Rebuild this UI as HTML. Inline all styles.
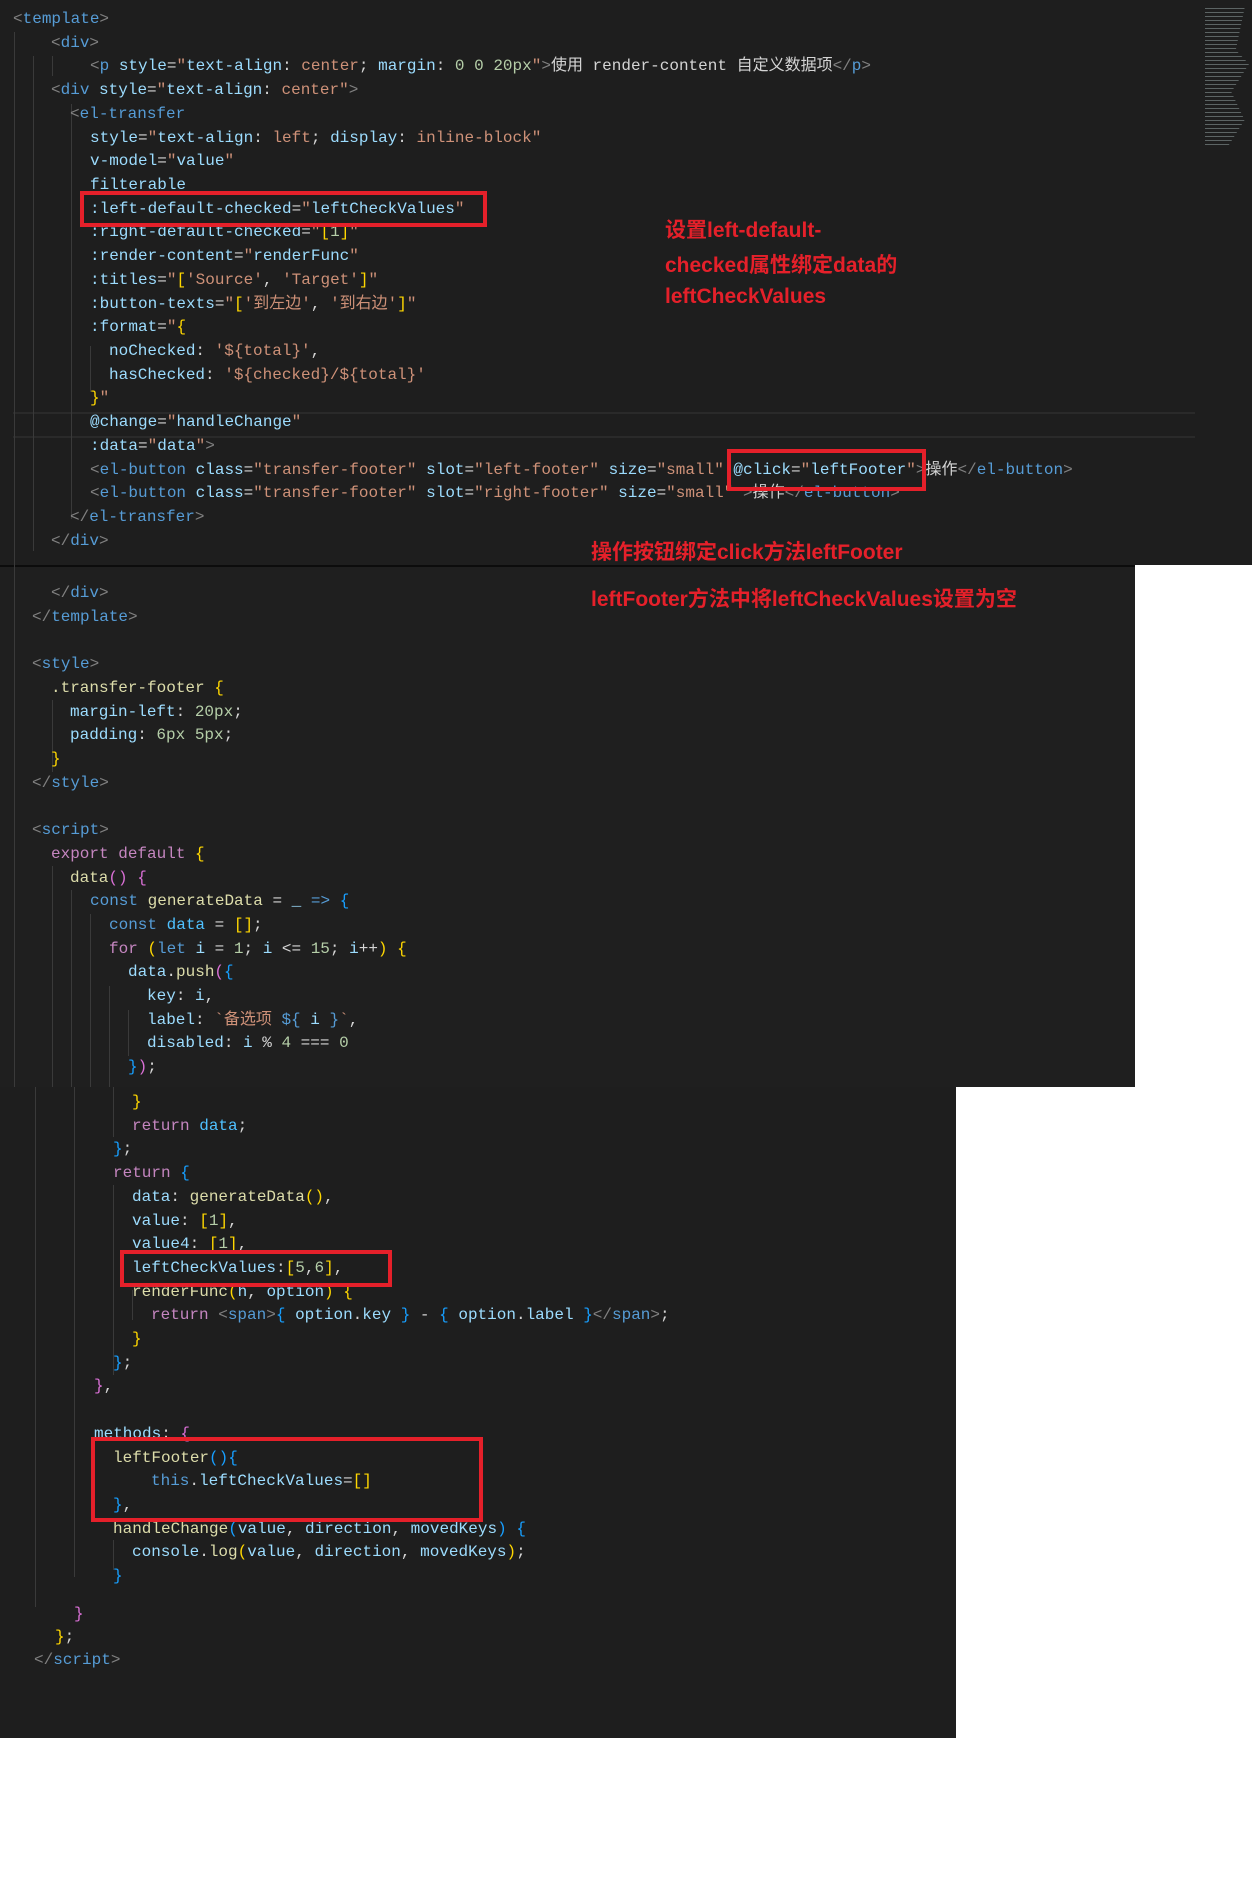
<!DOCTYPE html>
<html><head><meta charset="utf-8"><style>
html,body{margin:0;padding:0;background:#fff;}
body{width:1252px;height:1878px;position:relative;overflow:hidden;font-family:"Liberation Mono","Noto Sans CJK SC",monospace;font-size:16px;}
.p{position:absolute;background:#1e1e1e;}
.l{position:absolute;white-space:pre;height:24px;line-height:24px;color:#d4d4d4;}
.t{color:#808080}.g{color:#569cd6}.a{color:#9cdcfe}.s{color:#ce9178}.w{color:#d4d4d4}
.k{color:#c586c0}.f{color:#dcdcaa}.y{color:#ffd700}.pp{color:#da70d6}.bl{color:#179fff}.n{color:#b5cea8}.v{color:#4fc1ff}
.box{position:absolute;border:4px solid #e5202a;box-sizing:border-box;}
.ann{position:absolute;color:#e5202a;font-weight:bold;font-size:21px;font-family:"Liberation Sans","Noto Sans CJK SC",sans-serif;white-space:nowrap;line-height:26px;}
.ig{position:absolute;width:1px;background:#3a3a3a;}
</style></head><body>

<div class="p" style="left:0;top:0;width:1252px;height:565px;"></div>
<div class="p" style="left:0;top:565px;width:1135px;height:522px;background:#1f1f1f;border-top:2px solid #0c0c0c;box-sizing:border-box;"></div>
<div class="p" style="left:0;top:1087px;width:956px;height:651px;"></div>

<div style="position:absolute;left:13px;top:412px;width:1182px;height:22px;border-top:2px solid #2a2a2a;border-bottom:2px solid #2a2a2a;"></div>
<div class="ig" style="left:14px;top:32px;height:533px"></div>
<div class="ig" style="left:33px;top:56px;height:495px"></div>
<div class="ig" style="left:52px;top:56px;height:20px"></div>
<div class="ig" style="left:71px;top:104px;height:415px"></div>
<div class="ig" style="left:90px;top:346px;height:46px"></div>
<div class="ig" style="left:14px;top:565px;height:522px"></div>
<div class="ig" style="left:52px;top:700px;height:72px"></div>
<div class="ig" style="left:52px;top:866px;height:221px"></div>
<div class="ig" style="left:71px;top:890px;height:197px"></div>
<div class="ig" style="left:90px;top:914px;height:173px"></div>
<div class="ig" style="left:109px;top:986px;height:101px"></div>
<div class="ig" style="left:128px;top:1010px;height:46px"></div>
<div class="ig" style="left:35px;top:1087px;height:520px"></div>
<div class="ig" style="left:74px;top:1087px;height:490px"></div>
<div class="ig" style="left:113px;top:1087px;height:50px"></div>
<div class="ig" style="left:113px;top:1185px;height:190px"></div>
<div class="ig" style="left:132px;top:1290px;height:30px"></div>
<div class="ig" style="left:113px;top:1540px;height:30px"></div>

<div style="position:absolute;left:1205px;top:8px;width:44px;height:140px;opacity:.5;background:repeating-linear-gradient(#9aa 0 1px,transparent 1px 4px);clip-path:polygon(0 0,90% 0,70% 30%,100% 40%,60% 60%,90% 80%,50% 100%,0 100%);"></div>

<!-- Panel 1 -->
<div class="l" style="left:13px;top:7px"><span class="t">&lt;</span><span class="g">template</span><span class="t">&gt;</span></div>
<div class="l" style="left:51px;top:31px"><span class="t">&lt;</span><span class="g">div</span><span class="t">&gt;</span></div>
<div class="l" style="left:90px;top:54px"><span class="t">&lt;</span><span class="g">p</span> <span class="a">style</span>=<span class="s">"</span><span class="a">text-align</span>: <span class="s">center</span>; <span class="a">margin</span>: <span class="n">0 0 20px</span><span class="s">"</span><span class="t">&gt;</span>使用 render-content 自定义数据项<span class="t">&lt;/</span><span class="g">p</span><span class="t">&gt;</span></div>
<div class="l" style="left:51px;top:78px"><span class="t">&lt;</span><span class="g">div</span> <span class="a">style</span>=<span class="s">"</span><span class="a">text-align</span>: <span class="s">center</span><span class="s">"</span><span class="t">&gt;</span></div>
<div class="l" style="left:70px;top:102px"><span class="t">&lt;</span><span class="g">el-transfer</span></div>
<div class="l" style="left:90px;top:126px"><span class="a">style</span>=<span class="s">"</span><span class="a">text-align</span>: <span class="s">left</span>; <span class="a">display</span>: <span class="s">inline-block</span><span class="s">"</span></div>
<div class="l" style="left:90px;top:149px"><span class="a">v-model</span>=<span class="s">"</span><span class="a">value</span><span class="s">"</span></div>
<div class="l" style="left:90px;top:173px"><span class="a">filterable</span></div>
<div class="l" style="left:90px;top:197px"><span class="a">:left-default-checked</span>=<span class="s">"</span><span class="a">leftCheckValues</span><span class="s">"</span></div>
<div class="l" style="left:90px;top:220px"><span class="a">:right-default-checked</span>=<span class="s">"</span><span class="y">[</span><span class="n">1</span><span class="y">]</span><span class="s">"</span></div>
<div class="l" style="left:90px;top:244px"><span class="a">:render-content</span>=<span class="s">"</span><span class="a">renderFunc</span><span class="s">"</span></div>
<div class="l" style="left:90px;top:268px"><span class="a">:titles</span>=<span class="s">"</span><span class="y">[</span><span class="s">'Source'</span>, <span class="s">'Target'</span><span class="y">]</span><span class="s">"</span></div>
<div class="l" style="left:90px;top:292px"><span class="a">:button-texts</span>=<span class="s">"</span><span class="y">[</span><span class="s">'到左边'</span>, <span class="s">'到右边'</span><span class="y">]</span><span class="s">"</span></div>
<div class="l" style="left:90px;top:315px"><span class="a">:format</span>=<span class="s">"</span><span class="y">{</span></div>
<div class="l" style="left:109px;top:339px"><span class="a">noChecked</span>: <span class="s">'${total}'</span>,</div>
<div class="l" style="left:109px;top:363px"><span class="a">hasChecked</span>: <span class="s">'${checked}/${total}'</span></div>
<div class="l" style="left:90px;top:386px"><span class="y">}</span><span class="s">"</span></div>
<div class="l" style="left:90px;top:410px"><span class="a">@change</span>=<span class="s">"</span><span class="a">handleChange</span><span class="s">"</span></div>
<div class="l" style="left:90px;top:434px"><span class="a">:data</span>=<span class="s">"</span><span class="a">data</span><span class="s">"</span><span class="t">&gt;</span></div>
<div class="l" style="left:90px;top:458px"><span class="t">&lt;</span><span class="g">el-button</span> <span class="a">class</span>=<span class="s">"transfer-footer"</span> <span class="a">slot</span>=<span class="s">"left-footer"</span> <span class="a">size</span>=<span class="s">"small"</span> <span class="a">@click</span>=<span class="s">"</span><span class="a">leftFooter</span><span class="s">"</span><span class="t">&gt;</span>操作<span class="t">&lt;/</span><span class="g">el-button</span><span class="t">&gt;</span></div>
<div class="l" style="left:90px;top:481px"><span class="t">&lt;</span><span class="g">el-button</span> <span class="a">class</span>=<span class="s">"transfer-footer"</span> <span class="a">slot</span>=<span class="s">"right-footer"</span> <span class="a">size</span>=<span class="s">"small"</span> <span class="t">&gt;</span>操作<span class="t">&lt;/</span><span class="g">el-button</span><span class="t">&gt;</span></div>
<div class="l" style="left:70px;top:505px"><span class="t">&lt;/</span><span class="g">el-transfer</span><span class="t">&gt;</span></div>
<div class="l" style="left:51px;top:529px"><span class="t">&lt;/</span><span class="g">div</span><span class="t">&gt;</span></div>

<!-- Panel 2 -->
<div class="l" style="left:51px;top:581px"><span class="t">&lt;/</span><span class="g">div</span><span class="t">&gt;</span></div>
<div class="l" style="left:32px;top:605px"><span class="t">&lt;/</span><span class="g">template</span><span class="t">&gt;</span></div>
<div class="l" style="left:32px;top:652px"><span class="t">&lt;</span><span class="g">style</span><span class="t">&gt;</span></div>
<div class="l" style="left:51px;top:676px"><span class="f">.transfer-footer</span> <span class="y">{</span></div>
<div class="l" style="left:70px;top:700px"><span class="a">margin-left</span>: <span class="n">20px</span>;</div>
<div class="l" style="left:70px;top:723px"><span class="a">padding</span>: <span class="n">6px 5px</span>;</div>
<div class="l" style="left:51px;top:747px"><span class="y">}</span></div>
<div class="l" style="left:32px;top:771px"><span class="t">&lt;/</span><span class="g">style</span><span class="t">&gt;</span></div>
<div class="l" style="left:32px;top:818px"><span class="t">&lt;</span><span class="g">script</span><span class="t">&gt;</span></div>
<div class="l" style="left:51px;top:842px"><span class="k">export</span> <span class="k">default</span> <span class="y">{</span></div>
<div class="l" style="left:70px;top:866px"><span class="f">data</span><span class="pp">()</span> <span class="pp">{</span></div>
<div class="l" style="left:90px;top:889px"><span class="g">const</span> <span class="f">generateData</span> = <span class="a">_</span> <span class="g">=&gt;</span> <span class="bl">{</span></div>
<div class="l" style="left:109px;top:913px"><span class="g">const</span> <span class="v">data</span> = <span class="y">[]</span>;</div>
<div class="l" style="left:109px;top:937px"><span class="k">for</span> <span class="y">(</span><span class="g">let</span> <span class="a">i</span> = <span class="n">1</span>; <span class="a">i</span> &lt;= <span class="n">15</span>; <span class="a">i</span>++<span class="y">)</span> <span class="y">{</span></div>
<div class="l" style="left:128px;top:960px"><span class="a">data</span>.<span class="f">push</span><span class="pp">(</span><span class="bl">{</span></div>
<div class="l" style="left:147px;top:984px"><span class="a">key</span>: <span class="a">i</span>,</div>
<div class="l" style="left:147px;top:1008px"><span class="a">label</span>: <span class="s">`备选项 </span><span class="g">${</span> <span class="a">i</span> <span class="g">}</span><span class="s">`</span>,</div>
<div class="l" style="left:147px;top:1031px"><span class="a">disabled</span>: <span class="a">i</span> % <span class="n">4</span> === <span class="n">0</span></div>
<div class="l" style="left:128px;top:1055px"><span class="bl">}</span><span class="pp">)</span>;</div>

<!-- Panel 3 -->
<div class="l" style="left:132px;top:1090px"><span class="y">}</span></div>
<div class="l" style="left:132px;top:1114px"><span class="k">return</span> <span class="v">data</span>;</div>
<div class="l" style="left:113px;top:1137px"><span class="bl">}</span>;</div>
<div class="l" style="left:113px;top:1161px"><span class="k">return</span> <span class="bl">{</span></div>
<div class="l" style="left:132px;top:1185px"><span class="a">data</span>: <span class="f">generateData</span><span class="y">()</span>,</div>
<div class="l" style="left:132px;top:1209px"><span class="a">value</span>: <span class="y">[</span><span class="n">1</span><span class="y">]</span>,</div>
<div class="l" style="left:132px;top:1232px"><span class="a">value4</span>: <span class="y">[</span><span class="n">1</span><span class="y">]</span>,</div>
<div class="l" style="left:132px;top:1256px"><span class="a">leftCheckValues</span>:<span class="y">[</span><span class="n">5</span>,<span class="n">6</span><span class="y">]</span>,</div>
<div class="l" style="left:132px;top:1280px"><span class="f">renderFunc</span><span class="y">(</span><span class="a">h</span>, <span class="a">option</span><span class="y">)</span> <span class="y">{</span></div>
<div class="l" style="left:151px;top:1303px"><span class="k">return</span> <span class="t">&lt;</span><span class="g">span</span><span class="t">&gt;</span><span class="bl">{</span> <span class="a">option</span>.<span class="a">key</span> <span class="bl">}</span> - <span class="bl">{</span> <span class="a">option</span>.<span class="a">label</span> <span class="bl">}</span><span class="t">&lt;/</span><span class="g">span</span><span class="t">&gt;</span>;</div>
<div class="l" style="left:132px;top:1327px"><span class="y">}</span></div>
<div class="l" style="left:113px;top:1351px"><span class="bl">}</span>;</div>
<div class="l" style="left:94px;top:1374px"><span class="pp">}</span>,</div>
<div class="l" style="left:94px;top:1422px"><span class="a">methods</span>: <span class="pp">{</span></div>
<div class="l" style="left:113px;top:1446px"><span class="f">leftFooter</span><span class="bl">(){</span></div>
<div class="l" style="left:151px;top:1469px"><span class="g">this</span>.<span class="a">leftCheckValues</span>=<span class="y">[]</span></div>
<div class="l" style="left:113px;top:1493px"><span class="bl">}</span>,</div>
<div class="l" style="left:113px;top:1517px"><span class="f">handleChange</span><span class="bl">(</span><span class="a">value</span>, <span class="a">direction</span>, <span class="a">movedKeys</span><span class="bl">)</span> <span class="bl">{</span></div>
<div class="l" style="left:132px;top:1540px"><span class="a">console</span>.<span class="f">log</span><span class="y">(</span><span class="a">value</span>, <span class="a">direction</span>, <span class="a">movedKeys</span><span class="y">)</span>;</div>
<div class="l" style="left:113px;top:1564px"><span class="bl">}</span></div>
<div class="l" style="left:74px;top:1602px"><span class="pp">}</span></div>
<div class="l" style="left:55px;top:1625px"><span class="y">}</span>;</div>
<div class="l" style="left:34px;top:1648px"><span class="t">&lt;/</span><span class="g">script</span><span class="t">&gt;</span></div>

<!-- red boxes -->
<div class="box" style="left:80px;top:191px;width:407px;height:36px;"></div>
<div class="box" style="left:727px;top:449px;width:199px;height:42px;"></div>
<div class="box" style="left:120px;top:1250px;width:272px;height:37px;"></div>
<div class="box" style="left:91px;top:1437px;width:392px;height:85px;"></div>

<!-- annotations -->
<div class="ann" style="left:665px;top:218px">设置left-default-</div>
<div class="ann" style="left:665px;top:253px">checked属性绑定data的</div>
<div class="ann" style="left:665px;top:284px">leftCheckValues</div>
<div class="ann" style="left:591px;top:540px">操作按钮绑定click方法leftFooter</div>
<div class="ann" style="left:591px;top:587px">leftFooter方法中将leftCheckValues设置为空</div>

</body></html>
